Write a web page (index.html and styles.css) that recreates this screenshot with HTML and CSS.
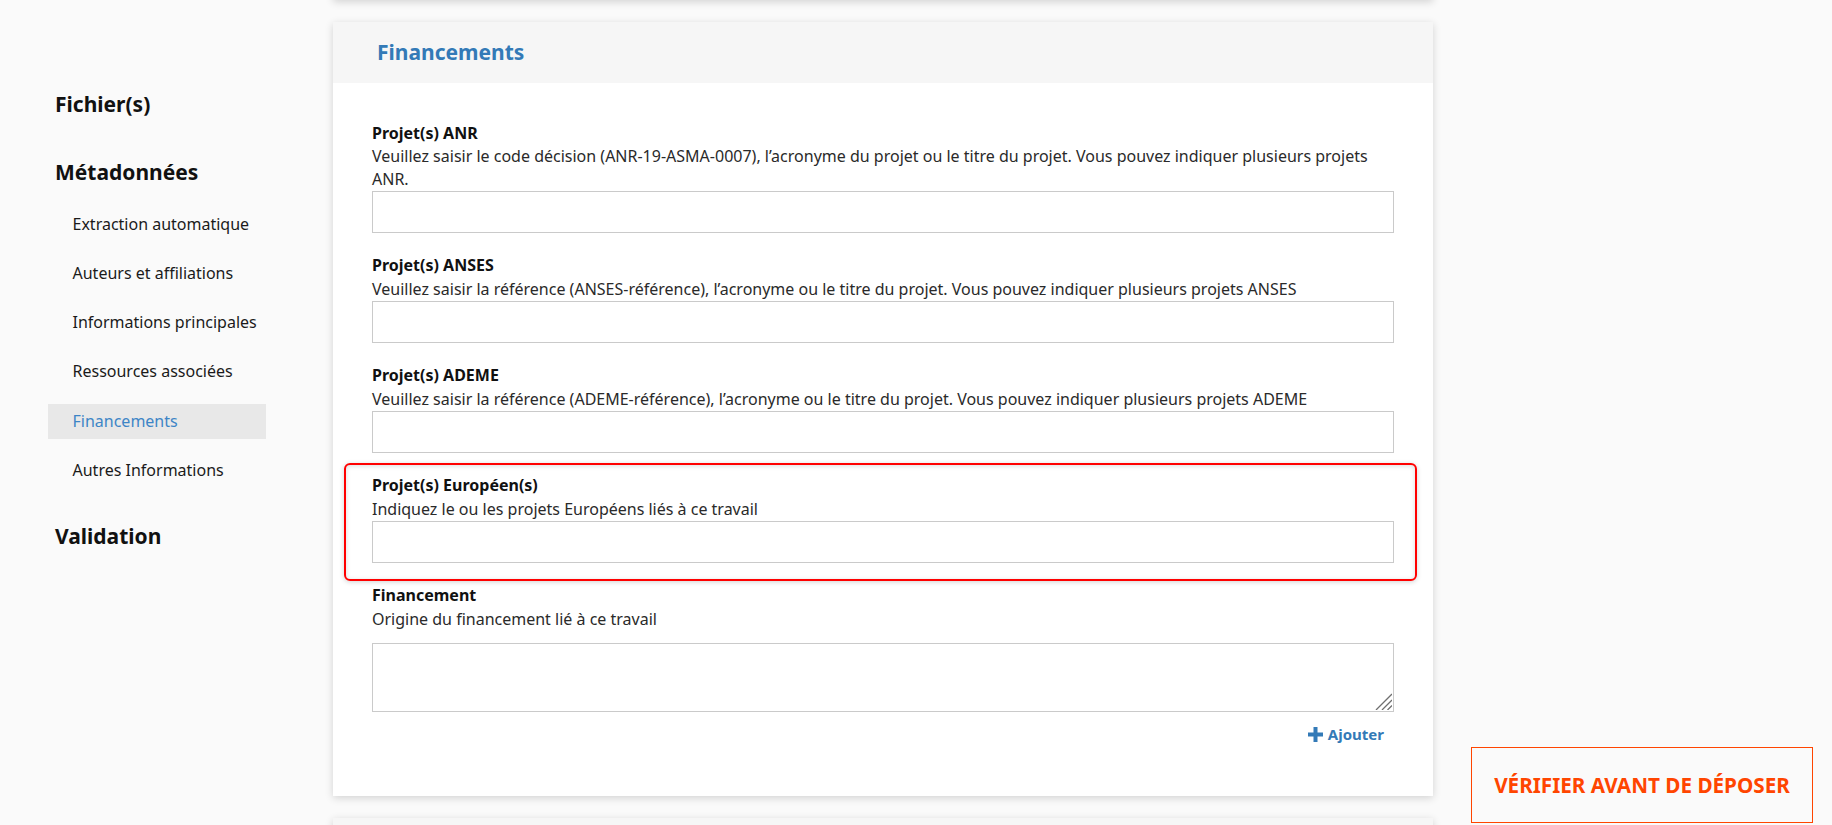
FILE: index.html
```html
<!DOCTYPE html>
<html lang="fr">
<head>
<meta charset="utf-8">
<title>Dépôt - Financements</title>
<link rel="stylesheet" href="styles.css">
</head>
<body>
<div class="page">
  <aside class="sidebar">
    <div class="nav-title">Fichier(s)</div>
    <div class="nav-title nav-title-meta">Métadonnées</div>
    <ul class="nav-sub">
      <li class="nav-item">Extraction automatique</li>
      <li class="nav-item">Auteurs et affiliations</li>
      <li class="nav-item">Informations principales</li>
      <li class="nav-item">Ressources associées</li>
      <li class="nav-item active">Financements</li>
      <li class="nav-item">Autres Informations</li>
    </ul>
    <div class="nav-title nav-title-valid">Validation</div>
  </aside>

  <main class="main">
    <section class="card card-prev"></section>

    <section class="card">
      <header class="card-header"><h2 class="card-title">Financements</h2></header>
      <div class="card-body">
        <div class="group">
          <div class="label">Projet(s) ANR</div>
          <div class="desc">Veuillez saisir le code décision (ANR-19-ASMA-0007), l’acronyme du projet ou le titre du projet. Vous pouvez indiquer plusieurs projets ANR.</div>
          <input class="field" type="text">
        </div>
        <div class="group">
          <div class="label">Projet(s) ANSES</div>
          <div class="desc">Veuillez saisir la référence (ANSES-référence), l’acronyme ou le titre du projet. Vous pouvez indiquer plusieurs projets ANSES</div>
          <input class="field" type="text">
        </div>
        <div class="group">
          <div class="label">Projet(s) ADEME</div>
          <div class="desc">Veuillez saisir la référence (ADEME-référence), l’acronyme ou le titre du projet. Vous pouvez indiquer plusieurs projets ADEME</div>
          <input class="field" type="text">
        </div>
        <div class="group highlighted">
          <div class="label">Projet(s) Européen(s)</div>
          <div class="desc">Indiquez le ou les projets Européens liés à ce travail</div>
          <input class="field" type="text">
        </div>
        <div class="group group-last">
          <div class="label">Financement</div>
          <div class="desc">Origine du financement lié à ce travail</div>
          <div class="area-wrap">
            <textarea class="field area"></textarea>
            <svg class="grip" width="17" height="17" viewBox="0 0 17 17" aria-hidden="true">
              <path d="M1 17L17 1M7 17L17 7M12.5 17L17 12.5" stroke="#6f6f6f" stroke-width="1.3" fill="none"/>
            </svg>
          </div>
          <div class="add-row">
            <span class="add-link">
              <svg class="plus" width="15" height="15" viewBox="0 0 15 15" aria-hidden="true"><path d="M5.5 0h4v5.5H15v4H9.5V15h-4V9.5H0v-4h5.5z" fill="#337ab7"/></svg>
              Ajouter
            </span>
          </div>
        </div>
      </div>
    </section>

    <section class="card card-next"><div class="card-header"></div></section>
  </main>

  <div class="actions">
    <button class="check-btn" type="button">VÉRIFIER AVANT DE DÉPOSER</button>
  </div>
</div>
</body>
</html>
```

FILE: styles.css
```css
* { box-sizing: border-box; }

html, body {
  margin: 0;
  padding: 0;
  background: #fafafa;
  font-family: "Noto Sans", "Open Sans", "DejaVu Sans", sans-serif;
  color: #222;
}

.page {
  display: flex;
  height: 825px;
  overflow: hidden;
}

/* Sidebar */
.sidebar {
  width: 218px;
  margin-left: 48px;
  padding-top: 89px;
  flex: none;
}

.nav-title {
  font-size: 21px;
  font-weight: 700;
  line-height: 30px;
  color: #111;
  padding-left: 7px;
}

.nav-title-meta { margin-top: 38px; }
.nav-title-valid { margin-top: 33px; }

.nav-sub {
  list-style: none;
  margin: 19.5px 0 0;
  padding: 0;
  display: flex;
  flex-direction: column;
  gap: 14.3px;
}

.nav-item {
  font-size: 16px;
  line-height: 21px;
  padding: 7px 0 7px 24.5px;
  color: #1a1a1a;
}

.nav-item.active {
  background: #e8e8e8;
  color: #3d85c6;
}

/* Main column */
.main {
  width: 1100px;
  margin-left: 67px;
  flex: none;
}

.card {
  background: #fff;
  box-shadow: 0 2px 8px rgba(0, 0, 0, 0.16);
  margin-top: 21.7px;
}

.card-prev {
  height: 100px;
  margin-top: -100px;
}

.card-header {
  background: #f6f6f6;
  height: 61px;
  display: flex;
  align-items: center;
  padding-left: 44px;
}

.card-title {
  margin: 0;
  font-size: 21px;
  font-weight: 700;
  color: #337ab7;
  line-height: 30px;
}

.card-body {
  padding: 39.3px 39px 50.7px;
}

.group {
  margin-bottom: 21px;
}

.group-last { margin-bottom: 0; }

.label {
  font-size: 16px;
  font-weight: 700;
  line-height: 22.5px;
  color: #111;
  margin-bottom: 1px;
}

.desc {
  font-size: 16px;
  line-height: 22.5px;
  color: #2a2a2a;
  margin-bottom: 1px;
}

.field {
  display: block;
  width: 100%;
  height: 42px;
  border: 1px solid #cacaca;
  background: #fff;
  margin: 0;
  padding: 6px 12px;
  font: inherit;
  font-size: 15px;
  outline: none;
}

.area-wrap {
  position: relative;
  margin-top: 13px;
}

.area {
  height: 69px;
  resize: none;
}

.grip {
  position: absolute;
  right: 2px;
  bottom: 2px;
  display: block;
}

.highlighted {
  position: relative;
}

.highlighted::before {
  content: "";
  position: absolute;
  top: -11px;
  bottom: -17.3px;
  left: -27.7px;
  right: -22.7px;
  border: 2px solid #f00;
  border-radius: 6px;
  box-shadow: 0 1px 5px rgba(0, 0, 0, 0.18), inset 0 1px 5px rgba(0, 0, 0, 0.14);
  pointer-events: none;
}

.add-row {
  display: flex;
  justify-content: flex-end;
  padding-right: 10px;
  margin-top: 10.5px;
}

.add-link {
  display: inline-flex;
  align-items: center;
  gap: 4.5px;
  font-size: 15px;
  font-weight: 700;
  line-height: 22.5px;
  color: #337ab7;
}

.plus { display: block; }

.card-next {
  height: 100px;
}

.card-next .card-header { height: 61px; }

/* Right column */
.actions {
  width: 342px;
  margin-left: 38px;
  flex: none;
  display: flex;
  flex-direction: column;
  justify-content: flex-end;
  padding-bottom: 2px;
}

.check-btn {
  height: 76px;
  width: 100%;
  border: 1.5px solid #ff4500;
  background: #fafafa;
  color: #ff4500;
  font-family: "Noto Sans", "Open Sans", sans-serif;
  font-size: 20.7px;
  font-weight: 700;
  padding: 0;
  cursor: pointer;
}
```
